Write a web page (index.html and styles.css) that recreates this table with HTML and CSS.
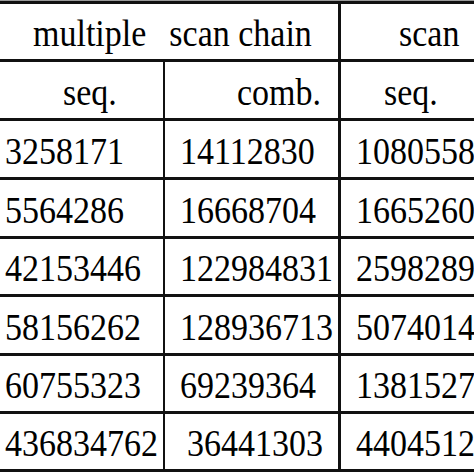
FILE: index.html
```html
<!DOCTYPE html>
<html>
<head>
<meta charset="utf-8">
<link rel="stylesheet" href="styles.css">
</head>
<body>
<div class="edge"></div>
<div class="grid">
  <div class="cell h1 span2"><span class="t">multiple</span><span class="t gap">scan chain</span></div>
  <div class="cell h1 c3 pad-scan"><span class="t">scan</span></div>

  <div class="cell c1 pad-seq1"><span class="t">seq.</span></div>
  <div class="cell c2 pad-comb"><span class="t">comb.</span></div>
  <div class="cell c3 pad-seq3"><span class="t">seq.</span></div>

  <div class="cell c1 num"><span class="t">3258171</span></div>
  <div class="cell c2 num"><span class="t">14112830</span></div>
  <div class="cell c3 num"><span class="t">1080558</span></div>

  <div class="cell c1 num"><span class="t">5564286</span></div>
  <div class="cell c2 num"><span class="t">16668704</span></div>
  <div class="cell c3 num"><span class="t">1665260</span></div>

  <div class="cell c1 num"><span class="t">42153446</span></div>
  <div class="cell c2 num"><span class="t">122984831</span></div>
  <div class="cell c3 num"><span class="t">2598289</span></div>

  <div class="cell c1 num"><span class="t">58156262</span></div>
  <div class="cell c2 num"><span class="t">128936713</span></div>
  <div class="cell c3 num"><span class="t">5074014</span></div>

  <div class="cell c1 num"><span class="t">60755323</span></div>
  <div class="cell c2 num"><span class="t">69239364</span></div>
  <div class="cell c3 num"><span class="t">1381527</span></div>

  <div class="cell c1 num"><span class="t">436834762</span></div>
  <div class="cell c2 num shift"><span class="t">36441303</span></div>
  <div class="cell c3 num"><span class="t">4404512</span></div>
</div>
</body>
</html>
```

FILE: styles.css
```css
html, body {
  margin: 0;
  padding: 0;
  background: #fff;
  overflow: hidden;
  width: 474px;
  height: 474px;
}

.edge {
  height: 1px;
  background: #9a9a9a;
}

.grid {
  display: grid;
  grid-template-columns: 165px 176px 133px;
  grid-template-rows: 58px 59px 59px 59px 58px 59px 58px 58px;
  border-top: 3px solid #111;
  font-family: "Liberation Serif", "Times New Roman", serif;
  font-size: 34px;
  color: #000;
  width: 474px;
  overflow: hidden;
}

.cell {
  box-sizing: border-box;
  border-bottom: 3px solid #111;
  display: flex;
  align-items: center;
  white-space: nowrap;
  padding-top: 5px;
  overflow: hidden;
}

.c1 { border-right: 2px solid #111; }
.c2 { border-right: 3px solid #111; }

.span2 {
  grid-column: 1 / 3;
  border-right: 3px solid #111;
  padding-left: 33px;
}

.t {
  display: inline-block;
  line-height: 1;
  transform: scaleY(1.1);
}

.gap { margin-left: 23px; }

.pad-scan { padding-left: 58px; }
.pad-seq1 { padding-left: 63px; }
.pad-comb { padding-left: 72px; }
.pad-seq3 { padding-left: 43px; }

.num.c1 { padding-left: 5px; }
.num.c2 { padding-left: 15px; }
.num.c3 { padding-left: 15px; }
.num.c2.shift { padding-left: 22px; }
```
